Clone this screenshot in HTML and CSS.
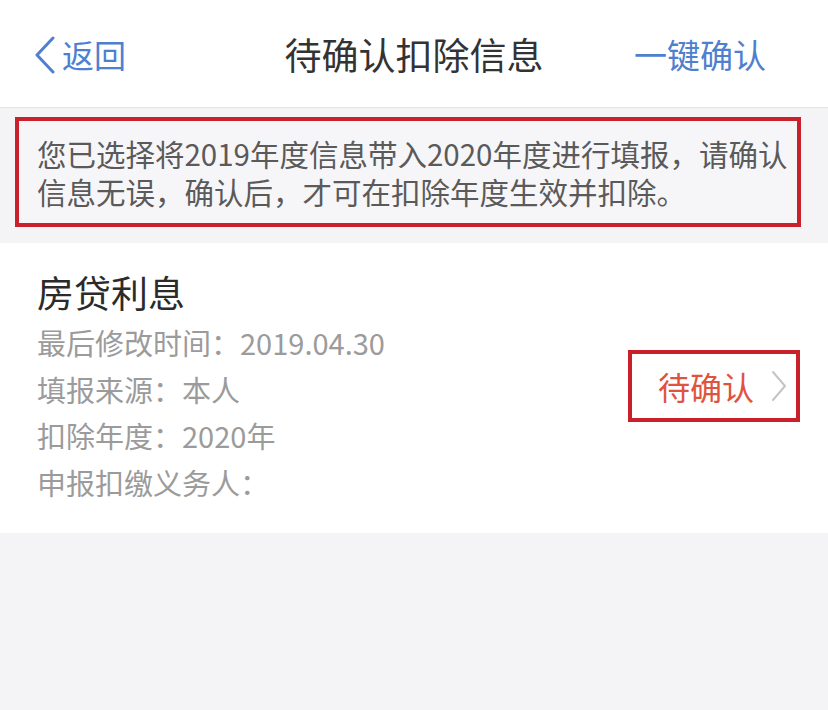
FILE: index.html
```html
<!DOCTYPE html>
<html lang="zh-CN">
<head>
  <meta charset="UTF-8">
  <title>待确认扣除信息</title>
  <link rel="stylesheet" href="styles.css">
</head>
<body>

  <header class="nav">
    <a class="nav-back" href="#">
      <svg class="back-icon" width="22" height="38" viewBox="0 0 22 38">
        <polyline points="19,2 3,19 19,36" fill="none" stroke="#4f7fcf" stroke-width="3" stroke-linecap="round" stroke-linejoin="round"/>
      </svg>
      <span>返回</span>
    </a>
    <h1 class="nav-title">待确认扣除信息</h1>
    <a class="nav-action" href="#">一键确认</a>
  </header>

  <section class="notice-band">
    <div class="notice">
      您已选择将2019年度信息带入2020年度进行填报，请确认<br>信息无误，确认后，才可在扣除年度生效并扣除。
    </div>
  </section>

  <section class="card">
    <div class="card-info">
      <div class="card-title">房贷利息</div>
      <div class="card-row">最后修改时间：2019.04.30</div>
      <div class="card-row">填报来源：本人</div>
      <div class="card-row">扣除年度：2020年</div>
      <div class="card-row">申报扣缴义务人：</div>
    </div>
    <a class="status" href="#">
      <span>待确认</span>
      <svg width="18" height="34" viewBox="0 0 18 34">
        <polyline points="3,3 15,17 3,31" fill="none" stroke="#c4c4c4" stroke-width="2" stroke-linecap="round" stroke-linejoin="round"/>
      </svg>
    </a>
  </section>

</body>
</html>
```

FILE: styles.css
```css
body { margin: 0; background: #f4f4f6; font-family: "Noto Sans CJK SC", "Noto Sans", sans-serif; }
a { text-decoration: none; }

.nav { height: 107px; background: #fff; border-bottom: 1px solid #e4e4e6; display: flex; align-items: center; justify-content: space-between; padding: 0 62px 0 34px; position: relative; }
.nav-back { display: flex; align-items: center; gap: 6px; color: #4f7fcf; font-size: 32px; }
.back-icon { margin-top: 2px; }
.nav-title { margin: 0; font-size: 37px; font-weight: 400; color: #333; position: absolute; left: 0; right: 0; text-align: center; pointer-events: none; }
.nav-action { color: #4f7fcf; font-size: 33px; }

.notice-band { padding: 9px 27px 16px 15px; }
.notice { border: 4px solid #c9202c; background: #f6f6f9; padding: 13px 8px 13px 18px; font-size: 29.5px; line-height: 38px; color: #5a5a5a; }

.card { background: #fff; display: flex; align-items: center; justify-content: space-between; padding: 23px 28px 28px 37px; }
.card-title { font-size: 37px; line-height: 52px; color: #2b2b2b; margin-bottom: 1px; }
.card-row { font-size: 29px; line-height: 46.5px; color: #9b9b9b; }

.status { display: flex; align-items: center; gap: 16px; border: 4px solid #c9202c; padding: 8px 8px 8px 26px; color: #e0533f; font-size: 32px; line-height: 48px; }
```
